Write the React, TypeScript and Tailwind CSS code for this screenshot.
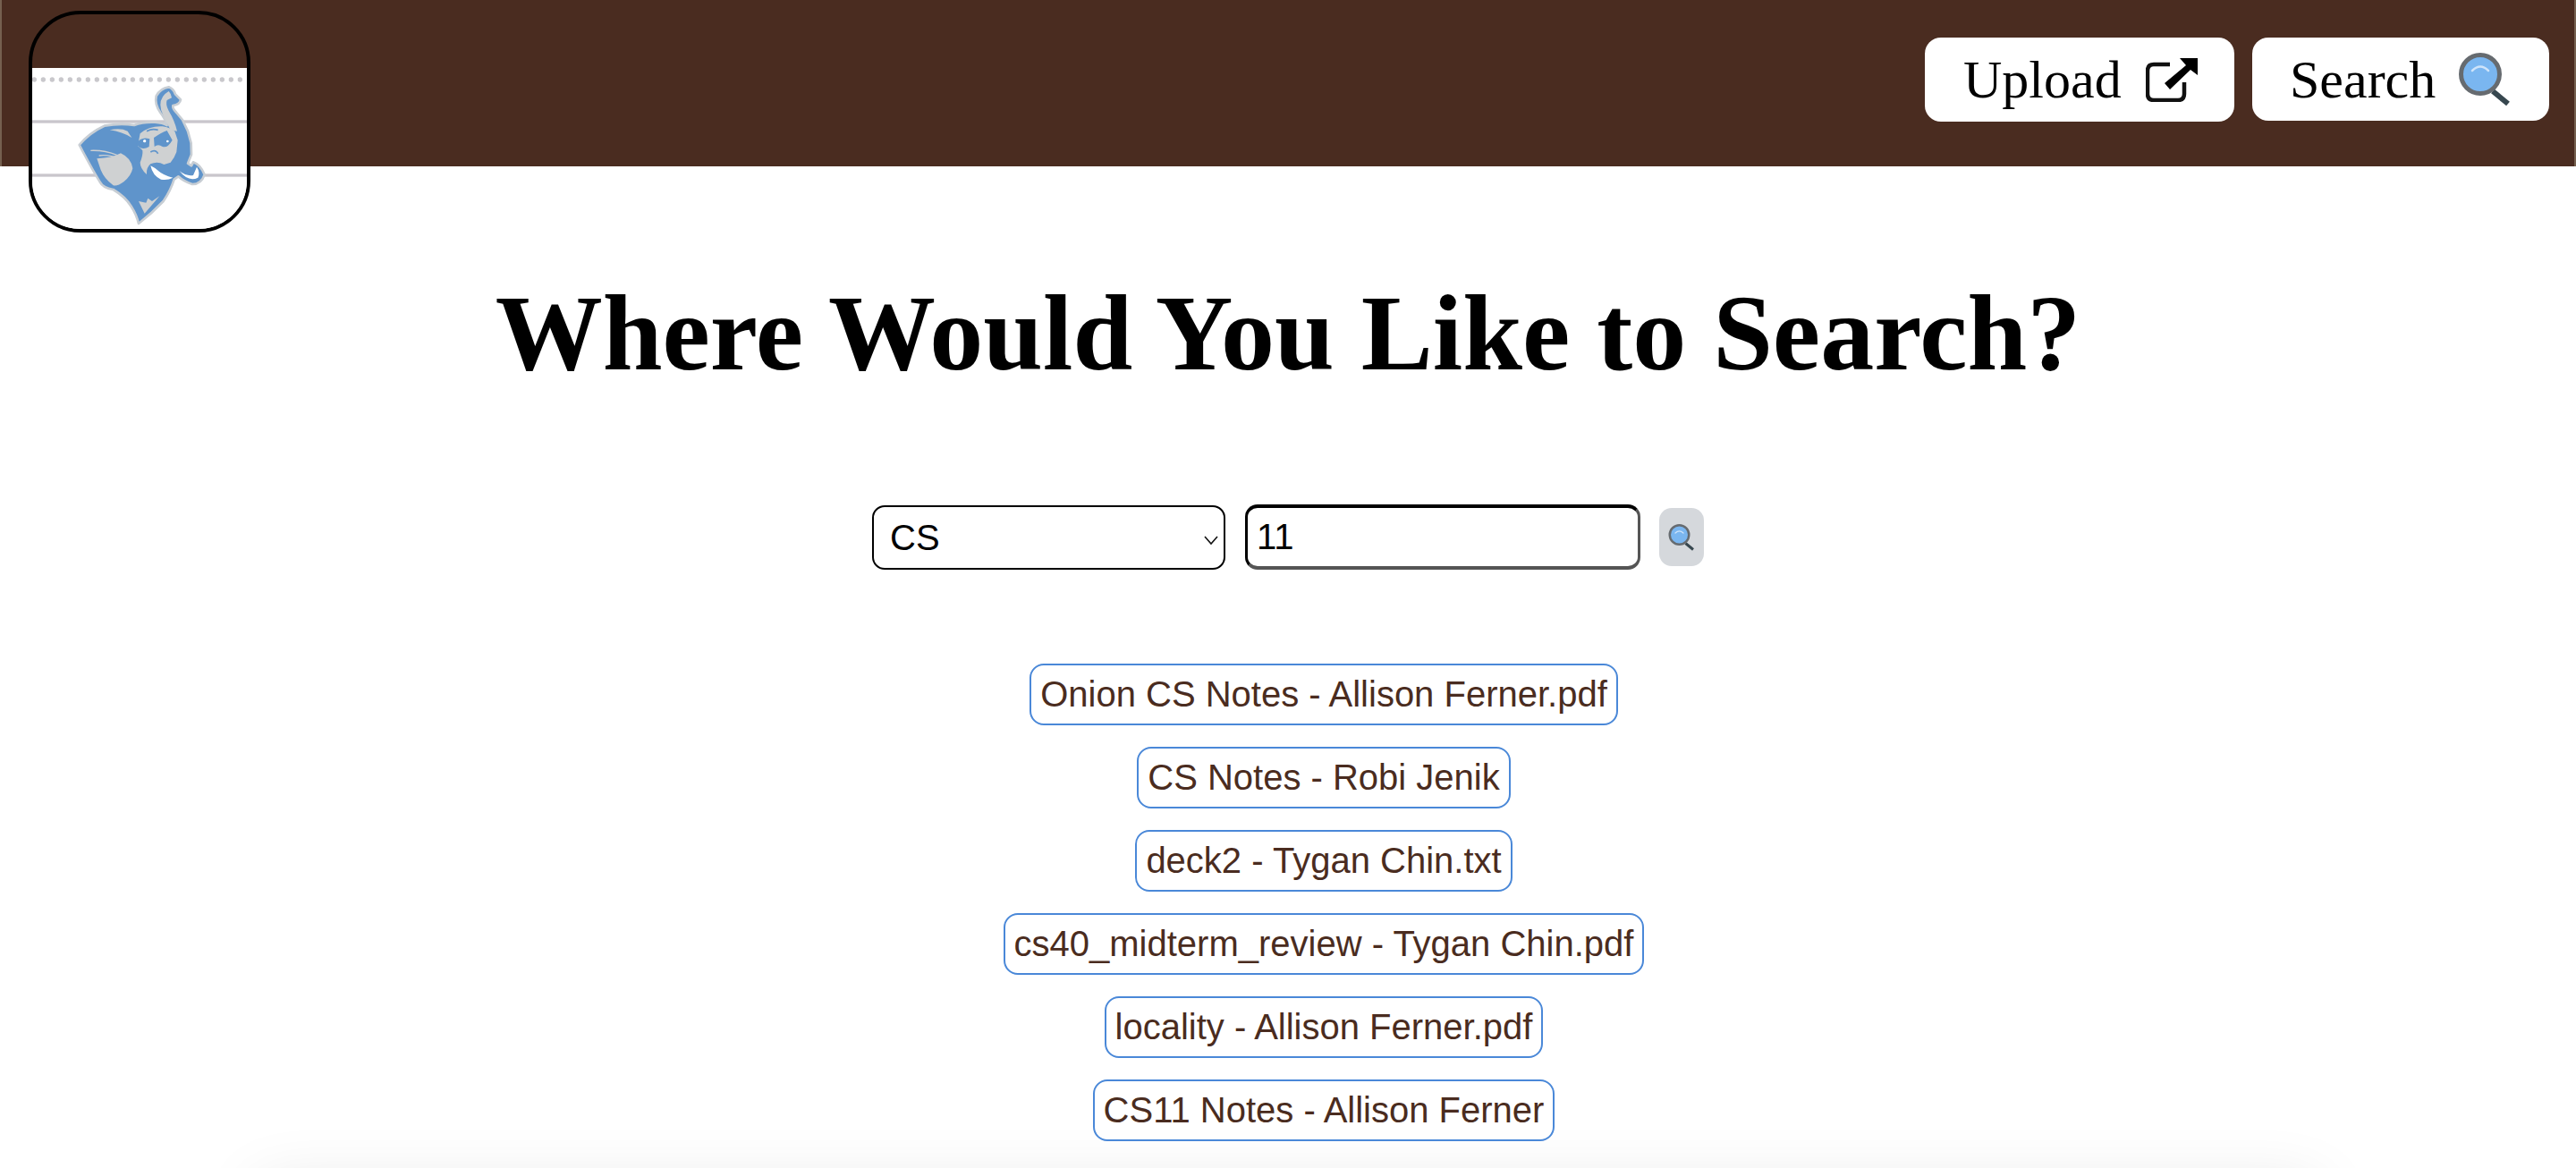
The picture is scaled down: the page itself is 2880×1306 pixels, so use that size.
const results = [
  "Onion CS Notes - Allison Ferner.pdf",
  "CS Notes - Robi Jenik",
  "deck2 - Tygan Chin.txt",
  "cs40_midterm_review - Tygan Chin.pdf",
  "locality - Allison Ferner.pdf",
  "CS11 Notes - Allison Ferner",
];

const MagnifierIcon = ({ className }: { className: string }) => (
  <svg viewBox="0 0 58 60" className={className}>
    <path d="M38 43 L55 57" stroke="#37474f" strokeWidth="6" strokeLinecap="butt" />
    <circle cx="24" cy="24" r="21.5" fill="#7ab6f0" stroke="#666b70" strokeWidth="5" />
    <path d="M15 20 Q24 11 33 20" fill="none" stroke="#cfe4fa" strokeWidth="2.5" strokeLinecap="round" />
  </svg>
);

const ExternalIcon = () => (
  <svg viewBox="0 0 58 50" className="h-[50px] w-[58px]">
    <path
      d="M27 8 H9 Q2 8 2 15 V41 Q2 48 9 48 H36 Q43 48 43 41 V28"
      fill="none"
      stroke="#111"
      strokeWidth="4.5"
    />
    <path d="M58 1 H38 L45 9 L21 29 L27 36 L50 14 L58 20 Z" fill="#000" />
  </svg>
);

const Logo = () => (
  <div className="absolute left-[32px] top-[12px] h-[248px] w-[248px] overflow-hidden rounded-[58px] border-[4px] border-black">
    <svg viewBox="108 48 720 720" className="h-full w-full">
      <rect x="108" y="228" width="720" height="540" fill="#fff" />
      {Array.from({ length: 24 }, (_, i) => (
        <circle key={i} cx={115 + i * 30} cy="267" r="8" fill="#c9c8cc" />
      ))}
      <rect x="108" y="403" width="720" height="10" fill="#c9c6cc" />
      <rect x="108" y="583" width="720" height="10" fill="#c9c6cc" />
      {/* elephant */}
      <path
        d="M266 486 Q300 445 350 422 Q405 412 450 420 Q480 408 520 410 Q545 412 560 420 Q555 400 538 378 Q518 350 524 322 Q538 296 566 292 Q582 298 588 316 L606 334 Q604 350 580 354 Q578 364 592 378 L612 402 L630 440 L641 480 L642 518 L630 548 L642 556 L648 544 Q672 552 686 586 Q675 618 645 618 Q615 608 598 592 L584 602 Q572 640 548 675 Q510 715 465 750 Q458 720 440 692 Q420 660 380 636 Q345 630 335 610 Q310 570 266 486 Z"
        fill="#5f94cb"
        stroke="#c8ced4"
        strokeWidth="8"
        strokeLinejoin="round"
      />
      <path d="M325 532 Q375 530 405 514 Q440 530 445 565 Q440 590 415 610 Q395 625 380 622 Q350 600 338 570 Z" fill="#cfd1d2" />
      <path d="M304 505 Q350 503 392 520 M332 522 Q365 518 402 532" stroke="#cfd1d2" strokeWidth="4" fill="none" />
      <path d="M368 436 Q405 428 428 440 L442 462 Q410 442 368 436 Z" fill="#cfd1d2" />
      <path
        d="M470 448 Q500 422 545 424 Q570 428 586 440 L596 470 L592 510 Q585 530 572 545 L550 552 Q528 540 505 550 Q490 562 492 585 Q470 565 470 545 Q480 520 478 505 Q470 495 462 490 Z"
        fill="#cfd1d2"
      />
      <path d="M456 482 Q475 456 502 466 L500 492 Q475 508 456 482 Z" fill="#5f94cb" />
      <circle cx="485" cy="473" r="5" fill="#fff" />
      <path d="M516 462 Q542 444 560 438 L578 470 Q562 498 545 492 Q530 482 518 492 Z" fill="#5f94cb" />
      <circle cx="562" cy="474" r="4" fill="#fff" />
      <path d="M492 440 Q510 430 530 436 M505 510 Q520 500 530 515" stroke="#5f94cb" strokeWidth="5" fill="none" />
      <path d="M538 352 Q538 322 566 306 Q574 314 576 328 L560 336 Q554 350 566 372 Q586 405 594 440 L572 436 Q560 415 548 388 Q538 370 538 352 Z" fill="#cfd1d2" />
      <path d="M505 556 Q512 590 540 602 Q562 606 580 596 Q548 588 530 572 Q518 562 505 556 Z" fill="#fff" />
      <path d="M602 574 Q625 592 648 588 L660 560 Q672 578 664 596 Q632 612 602 574 Z" fill="#fff" />
      <path d="M465 675 L490 680 L496 665 L510 675 L535 658 L485 716 Z" fill="#cfd1d2" />
    </svg>
  </div>
);

const App = () => {
  return (
    <div className="relative h-[1306px] overflow-hidden bg-white font-['Liberation_Sans',Arial,sans-serif]">
      <header className="flex h-[186px] items-start justify-end gap-[20px] border-x-2 border-x-[#75604f] bg-[#4a2c20] pr-[28px] pt-[42px] font-['Liberation_Serif','Times_New_Roman',serif] text-[60px] text-black">
        <button className="flex h-[94px] w-[346px] items-center rounded-[18px] bg-white pl-[43px]">
          <span>Upload</span>
          <span className="ml-[27px]">
            <ExternalIcon />
          </span>
        </button>
        <button className="flex h-[93px] w-[332px] items-center rounded-[18px] bg-white pl-[42px]">
          <span>Search</span>
          <MagnifierIcon className="ml-[26px] h-[60px] w-[58px]" />
        </button>
      </header>
      <Logo />

      <h1 className="mt-[121px] text-center font-['Liberation_Serif','Times_New_Roman',serif] text-[120px] font-bold leading-[132px] text-black">
        Where Would You Like to Search?
      </h1>

      <form className="mt-[125px] flex items-center justify-center">
        <div className="relative h-[72px] w-[395px]">
          <select className="h-full w-full appearance-none rounded-[14px] border-2 border-black bg-white pl-[18px] text-[40px] text-black outline-none">
            <option>CS</option>
          </select>
          <svg viewBox="0 0 16 12" className="pointer-events-none absolute right-[8px] top-[33px] h-[12px] w-[16px]">
            <path d="M1 2 L8 10 L15 2" fill="none" stroke="#111" strokeWidth="1.6" />
          </svg>
        </div>
        <input
          readOnly
          value="11"
          className="ml-[22px] h-[73px] w-[442px] rounded-[14px] border-x-[3px] border-b-[4px] border-t-[4px] border-b-[#555] border-l-black border-r-[#555] border-t-black pl-[10px] text-[40px] text-black outline-none"
        />
        <button type="button" className="ml-[21px] flex h-[65px] w-[50px] items-center justify-center rounded-[14px] bg-[#d5d8dc]">
          <MagnifierIcon className="h-[30px] w-[30px]" />
        </button>
      </form>

      <ul className="mt-[105px] flex flex-col items-center gap-[24px] pl-[80px]">
        {results.map((name) => (
          <li key={name}>
            <a className="block rounded-[16px] border-2 border-[#4a88d8] px-[10px] py-[10px] text-[40px] leading-[45px] text-[#4a2c20]">
              {name}
            </a>
          </li>
        ))}
      </ul>

      <div className="mx-auto mt-[48px] h-[200px] w-[2304px] shadow-[0_0_70px_rgba(0,0,0,0.1)]" />
    </div>
  );
};

export default App;
